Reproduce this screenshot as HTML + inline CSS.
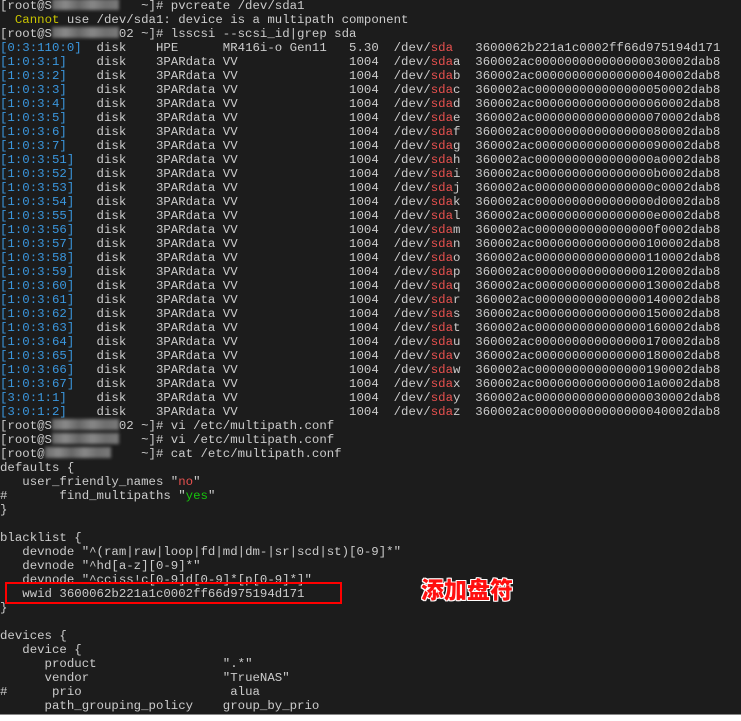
<!DOCTYPE html>
<html><head><meta charset="utf-8"><style>
html,body{margin:0;padding:0;background:#fff;width:741px;height:721px;overflow:hidden}
#t{position:absolute;left:0;top:0;width:741px;height:714px;background:#1c1c1c;border-bottom:1px solid #888;overflow:hidden}
pre{margin:-1px 0 0 0;padding:0;font-family:"Liberation Mono",monospace;font-size:12.38px;line-height:14px;color:#cccccc;white-space:pre}
.c{color:#3a96dd}.r{color:#e8514f}.y{color:#c8c400}.g{color:#16c60c}
.b{display:inline-block;width:9ch;height:11px;vertical-align:-1px;background:linear-gradient(90deg,#6a6a6a,#8a8a8a,#666,#888,#6e6e6e,#7a7a7a);filter:blur(1.5px)}
#box{position:absolute;left:5px;top:582px;width:333px;height:18px;border:2px solid #ff0000}
#note{position:absolute;left:421px;top:574px;font-family:"Noto Sans CJK SC",sans-serif;font-weight:900;font-size:23px;line-height:28px;color:#ff1010;text-shadow:-1px -1px 0 #fff,1px -1px 0 #fff,-1px 1px 0 #fff,1px 1px 0 #fff,0 1px 0 #fff,1px 0 0 #fff,-1px 0 0 #fff,0 -1px 0 #fff}
</style></head><body><div id="t"><pre>[root@S<span class="b"></span>   ~]# pvcreate /dev/sda1
  <span class="y">Cannot</span> use /dev/sda1: device is a multipath component
[root@S<span class="b"></span>02 ~]# lsscsi --scsi_id|grep sda
<span class="c">[0:3:110:0]</span>  disk    HPE      MR416i-o Gen11   5.30  /dev/<span class="r">sda</span>   3600062b221a1c0002ff66d975194d171
<span class="c">[1:0:3:1]</span>    disk    3PARdata VV               1004  /dev/<span class="r">sda</span>a  360002ac000000000000000030002dab8
<span class="c">[1:0:3:2]</span>    disk    3PARdata VV               1004  /dev/<span class="r">sda</span>b  360002ac000000000000000040002dab8
<span class="c">[1:0:3:3]</span>    disk    3PARdata VV               1004  /dev/<span class="r">sda</span>c  360002ac000000000000000050002dab8
<span class="c">[1:0:3:4]</span>    disk    3PARdata VV               1004  /dev/<span class="r">sda</span>d  360002ac000000000000000060002dab8
<span class="c">[1:0:3:5]</span>    disk    3PARdata VV               1004  /dev/<span class="r">sda</span>e  360002ac000000000000000070002dab8
<span class="c">[1:0:3:6]</span>    disk    3PARdata VV               1004  /dev/<span class="r">sda</span>f  360002ac000000000000000080002dab8
<span class="c">[1:0:3:7]</span>    disk    3PARdata VV               1004  /dev/<span class="r">sda</span>g  360002ac000000000000000090002dab8
<span class="c">[1:0:3:51]</span>   disk    3PARdata VV               1004  /dev/<span class="r">sda</span>h  360002ac0000000000000000a0002dab8
<span class="c">[1:0:3:52]</span>   disk    3PARdata VV               1004  /dev/<span class="r">sda</span>i  360002ac0000000000000000b0002dab8
<span class="c">[1:0:3:53]</span>   disk    3PARdata VV               1004  /dev/<span class="r">sda</span>j  360002ac0000000000000000c0002dab8
<span class="c">[1:0:3:54]</span>   disk    3PARdata VV               1004  /dev/<span class="r">sda</span>k  360002ac0000000000000000d0002dab8
<span class="c">[1:0:3:55]</span>   disk    3PARdata VV               1004  /dev/<span class="r">sda</span>l  360002ac0000000000000000e0002dab8
<span class="c">[1:0:3:56]</span>   disk    3PARdata VV               1004  /dev/<span class="r">sda</span>m  360002ac0000000000000000f0002dab8
<span class="c">[1:0:3:57]</span>   disk    3PARdata VV               1004  /dev/<span class="r">sda</span>n  360002ac000000000000000100002dab8
<span class="c">[1:0:3:58]</span>   disk    3PARdata VV               1004  /dev/<span class="r">sda</span>o  360002ac000000000000000110002dab8
<span class="c">[1:0:3:59]</span>   disk    3PARdata VV               1004  /dev/<span class="r">sda</span>p  360002ac000000000000000120002dab8
<span class="c">[1:0:3:60]</span>   disk    3PARdata VV               1004  /dev/<span class="r">sda</span>q  360002ac000000000000000130002dab8
<span class="c">[1:0:3:61]</span>   disk    3PARdata VV               1004  /dev/<span class="r">sda</span>r  360002ac000000000000000140002dab8
<span class="c">[1:0:3:62]</span>   disk    3PARdata VV               1004  /dev/<span class="r">sda</span>s  360002ac000000000000000150002dab8
<span class="c">[1:0:3:63]</span>   disk    3PARdata VV               1004  /dev/<span class="r">sda</span>t  360002ac000000000000000160002dab8
<span class="c">[1:0:3:64]</span>   disk    3PARdata VV               1004  /dev/<span class="r">sda</span>u  360002ac000000000000000170002dab8
<span class="c">[1:0:3:65]</span>   disk    3PARdata VV               1004  /dev/<span class="r">sda</span>v  360002ac000000000000000180002dab8
<span class="c">[1:0:3:66]</span>   disk    3PARdata VV               1004  /dev/<span class="r">sda</span>w  360002ac000000000000000190002dab8
<span class="c">[1:0:3:67]</span>   disk    3PARdata VV               1004  /dev/<span class="r">sda</span>x  360002ac0000000000000001a0002dab8
<span class="c">[3:0:1:1]</span>    disk    3PARdata VV               1004  /dev/<span class="r">sda</span>y  360002ac000000000000000030002dab8
<span class="c">[3:0:1:2]</span>    disk    3PARdata VV               1004  /dev/<span class="r">sda</span>z  360002ac000000000000000040002dab8
[root@S<span class="b"></span>02 ~]# vi /etc/multipath.conf
[root@S<span class="b"></span>   ~]# vi /etc/multipath.conf
[root@<span class="b"></span>    ~]# cat /etc/multipath.conf
defaults {
   user_friendly_names "<span class="r">no</span>"
#       find_multipaths "<span class="g">yes</span>"
}

blacklist {
   devnode "^(ram|raw|loop|fd|md|dm-|sr|scd|st)[0-9]*"
   devnode "^hd[a-z][0-9]*"
   devnode "^cciss!c[0-9]d[0-9]*[p[0-9]*]"
   wwid 3600062b221a1c0002ff66d975194d171
}

devices {
   device {
      product                 ".*"
      vendor                  "TrueNAS"
#      prio                    alua
      path_grouping_policy    group_by_prio
</pre>
<div id="box"></div>
<div id="note">添加盘符</div>
</div></body></html>
